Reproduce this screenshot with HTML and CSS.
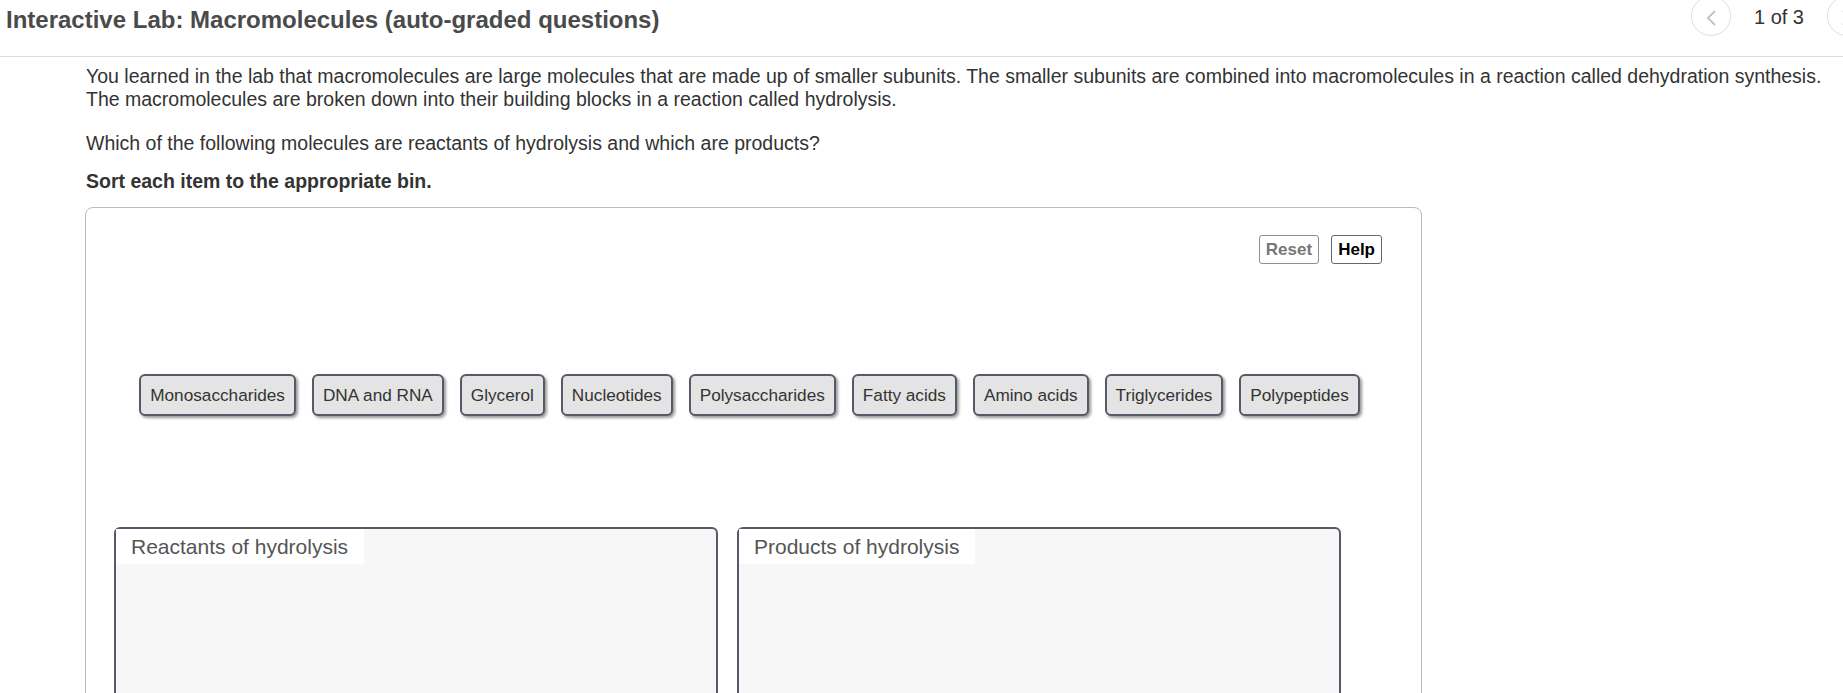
FILE: index.html
```html
<!DOCTYPE html>
<html lang="en">
<head>
    <meta charset="UTF-8">
    <meta name="viewport" content="width=device-width, initial-scale=1.0">
    <title>Interactive Lab: Macromolecules</title>
    <link rel="stylesheet" href="styles.css">
</head>
<body>
    <div class="header">
        <h1 class="title">Interactive Lab: Macromolecules (auto-graded questions)</h1>
        <div class="pager">
            <button class="pager-btn" aria-label="Previous">
                <svg width="14" height="18" viewBox="0 0 14 18"><polyline points="11,2 4,9 11,16" fill="none" stroke="#c4c4c4" stroke-width="2"/></svg>
            </button>
            <span class="pager-count">1 of 3</span>
            <button class="pager-btn" aria-label="Next">
                <svg width="14" height="18" viewBox="0 0 14 18"><polyline points="3,2 10,9 3,16" fill="none" stroke="#c4c4c4" stroke-width="2"/></svg>
            </button>
        </div>
    </div>

    <div class="content">
        <p class="intro">You learned in the lab that macromolecules are large molecules that are made up of smaller subunits. The smaller subunits are combined into macromolecules in a reaction called dehydration synthesis.<br>The macromolecules are broken down into their building blocks in a reaction called hydrolysis.</p>
        <p class="question">Which of the following molecules are reactants of hydrolysis and which are products?</p>
        <p class="instruction">Sort each item to the appropriate bin.</p>

        <div class="sorter">
            <div class="toolbar">
                <button class="tool-btn reset">Reset</button>
                <button class="tool-btn help">Help</button>
            </div>

            <div class="tokens">
                <div class="token">Monosaccharides</div>
                <div class="token">DNA and RNA</div>
                <div class="token">Glycerol</div>
                <div class="token">Nucleotides</div>
                <div class="token">Polysaccharides</div>
                <div class="token">Fatty acids</div>
                <div class="token">Amino acids</div>
                <div class="token">Triglycerides</div>
                <div class="token">Polypeptides</div>
            </div>

            <div class="bins">
                <div class="bin">
                    <div class="bin-label">Reactants of hydrolysis</div>
                </div>
                <div class="bin">
                    <div class="bin-label">Products of hydrolysis</div>
                </div>
            </div>
        </div>
    </div>
</body>
</html>
```

FILE: styles.css
```css
* {
    margin: 0;
    padding: 0;
    box-sizing: border-box;
}

html,
body {
    overflow: hidden;
}

body {
    font-family: "Liberation Sans", Arial, sans-serif;
    color: #333;
    background: white;
}

.header {
    display: flex;
    height: 57px;
    border-bottom: 1px solid #dcdcdc;
}

.title {
    font-size: 24px;
    line-height: 27px;
    font-weight: bold;
    color: #4a4a4a;
    padding: 6px 0 0 6px;
}

.pager {
    margin-left: auto;
    margin-right: -24px;
    margin-top: -4px;
    display: flex;
    align-items: flex-start;
    gap: 23px;
    height: 40px;
}

.pager-btn {
    width: 40px;
    height: 40px;
    border-radius: 50%;
    border: 1px solid #dedede;
    background: white;
    display: flex;
    align-items: center;
    justify-content: center;
    padding-top: 3px;
}

.pager-count {
    font-size: 20px;
    line-height: 24px;
    padding-top: 9px;
    color: #333;
}

.content {
    padding: 8px 0 0 86px;
}

.intro,
.question,
.instruction {
    font-size: 19.5px;
    line-height: 22px;
}

.intro {
    line-height: 23px;
    margin-bottom: 21px;
}

.question {
    margin-bottom: 16px;
}

.instruction {
    font-weight: bold;
    margin-bottom: 15px;
}

.sorter {
    width: 1337px;
    height: 620px;
    margin-left: -1px;
    border: 1px solid #bbb;
    border-radius: 8px;
    padding: 27px 0 0 28px;
}

.toolbar {
    display: flex;
    justify-content: flex-end;
    gap: 12px;
    padding-right: 39px;
}

.tool-btn {
    font-family: "Liberation Sans", Arial, sans-serif;
    font-size: 17px;
    font-weight: bold;
    height: 29px;
    padding: 0 6px;
    background: white;
    border-radius: 3px;
}

.reset {
    color: #777;
    border: 1px solid #8f8f8f;
}

.help {
    color: #000;
    border: 1px solid #666;
}

.tokens {
    display: flex;
    justify-content: center;
    gap: 16px;
    margin: 110px 36px 0 0;
}

.token {
    font-size: 17.2px;
    line-height: 20px;
    color: #333;
    background: #e4e4e4;
    border: 2px solid #555a66;
    border-radius: 6px;
    padding: 9px 9px;
    box-shadow: 2px 2px 3px rgba(0, 0, 0, 0.4);
}

.bins {
    display: flex;
    gap: 19px;
    margin-top: 111px;
}

.bin {
    width: 604px;
    height: 300px;
    background: #f7f7f7;
    border: 2px solid #555a66;
    border-radius: 6px;
}

.bin-label {
    display: inline-block;
    background: white;
    font-size: 21px;
    line-height: 34px;
    padding: 1px 16px 0 15px;
    color: #555;
}
```
